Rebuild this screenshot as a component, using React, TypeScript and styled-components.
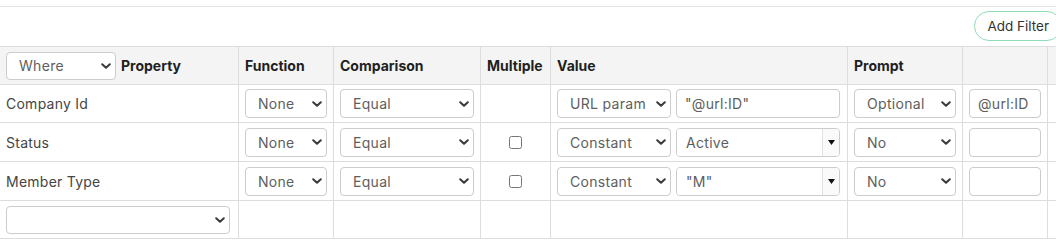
import { FC, ReactNode } from "react";
import styled, { createGlobalStyle } from "styled-components";

const GlobalStyle = createGlobalStyle`
  html, body {
    margin: 0;
    padding: 0;
    background: #ffffff;
    overflow: hidden;
  }
  body {
    font-family: Inter, "Open Sans", "Noto Sans", sans-serif;
    color: #444444;
  }
`;

const Page = styled("div")`
  width: 1062px;
  margin-top: 6px;
  border-top: 1px solid #e4e4e4;
`;

const Toolbar = styled("div")`
  display: flex;
  justify-content: flex-end;
  padding: 4px 0 5px;
`;

const AddButton = styled("button")`
  height: 30px;
  padding: 0 12px;
  border: 1px solid #8fdcb8;
  border-radius: 16px;
  background: #ffffff;
  color: #333333;
  font-family: inherit;
  font-size: 13.5px;
  cursor: pointer;
`;

const Grid = styled("div")`
  display: grid;
  grid-template-columns: 239px 95px 147px 70px 297px 115px 85px 1fr;
  grid-template-rows: 38px 38px 39px 39px 38px;
  border-top: 1px solid #dddddd;
`;

const Cell = styled("div")<{ $head?: boolean; $center?: boolean }>`
  box-sizing: border-box;
  display: flex;
  align-items: center;
  justify-content: ${(p) => (p.$center ? "center" : "flex-start")};
  gap: 5px;
  padding: 0 6px;
  border-right: 1px solid #dddddd;
  border-bottom: 1px solid #dddddd;
  background: ${(p) => (p.$head ? "#f4f4f4" : "#ffffff")};
  min-width: 0;
`;

const HeadText = styled("span")`
  font-size: 14px;
  font-weight: 700;
  color: #1f1f1f;
`;

const Label = styled("span")`
  font-size: 14px;
  letter-spacing: 0.25px;
  color: #454545;
`;

const SelectWrap = styled("div")<{ $w?: number }>`
  position: relative;
  flex: ${(p) => (p.$w ? "0 0 auto" : "1 1 auto")};
  width: ${(p) => (p.$w ? `${p.$w}px` : "100%")};
  min-width: 0;
`;

const NativeSelect = styled("select")<{ $h: number }>`
  appearance: none;
  box-sizing: border-box;
  width: 100%;
  height: ${(p) => p.$h}px;
  padding: 0 20px 0 12px;
  border: 1px solid #cccccc;
  border-radius: 4px;
  background: #ffffff;
  color: #5e5e5e;
  font-family: inherit;
  font-size: 14px;
  letter-spacing: 0.3px;
`;

const Chevron = styled("svg")`
  position: absolute;
  right: 5px;
  top: 50%;
  margin-top: -3px;
  width: 10px;
  height: 6px;
  pointer-events: none;
`;

const TextInput = styled("input")<{ $w?: number }>`
  box-sizing: border-box;
  width: ${(p) => (p.$w ? `${p.$w}px` : "100%")};
  height: 29px;
  padding: 0 8px;
  border: 1px solid #cccccc;
  border-radius: 4px;
  color: #5e5e5e;
  font-family: inherit;
  font-size: 14px;
  letter-spacing: 0.3px;
  min-width: 0;
`;

const Combo = styled("div")`
  box-sizing: border-box;
  display: flex;
  width: 164px;
  height: 29px;
  border: 1px solid #cccccc;
  border-radius: 4px;
  overflow: hidden;
`;

const ComboInput = styled("input")`
  flex: 1 1 auto;
  min-width: 0;
  padding: 0 9px;
  border: none;
  outline: none;
  color: #5e5e5e;
  font-family: inherit;
  font-size: 14px;
  letter-spacing: 0.3px;
`;

const ComboButton = styled("div")`
  display: flex;
  align-items: center;
  justify-content: center;
  width: 27px;
  border-left: 1px solid #e2e2e2;
  background: #fafafa;
`;

const Check = styled("input")`
  width: 13px;
  height: 13px;
  margin: 0;
`;

const Select: FC<{ value: string; w?: number; h?: number }> = ({
  value,
  w,
  h = 29,
}) => (
  <SelectWrap $w={w}>
    <NativeSelect $h={h} defaultValue={value}>
      <option value={value}>{value}</option>
    </NativeSelect>
    <Chevron viewBox="0 0 10 6">
      <path
        d="M1.2 1.2 L5 4.8 L8.8 1.2"
        fill="none"
        stroke="#3a3a3a"
        strokeWidth="2"
        strokeLinecap="round"
        strokeLinejoin="round"
      />
    </Chevron>
  </SelectWrap>
);

const ComboBox: FC<{ value: string }> = ({ value }) => (
  <Combo>
    <ComboInput defaultValue={value} />
    <ComboButton>
      <svg width="7" height="5" viewBox="0 0 7 5">
        <polygon points="0,0 7,0 3.5,5" fill="#111" />
      </svg>
    </ComboButton>
  </Combo>
);

interface IFilterRow {
  property: string;
  multiple: boolean;
  source: string;
  value: string;
  combo: boolean;
  prompt: string;
  param: string;
}

const rows: IFilterRow[] = [
  {
    property: "Company Id",
    multiple: false,
    source: "URL param",
    value: '"@url:ID"',
    combo: false,
    prompt: "Optional",
    param: "@url:ID",
  },
  {
    property: "Status",
    multiple: true,
    source: "Constant",
    value: "Active",
    combo: true,
    prompt: "No",
    param: "",
  },
  {
    property: "Member Type",
    multiple: true,
    source: "Constant",
    value: '"M"',
    combo: true,
    prompt: "No",
    param: "",
  },
];

const Row: FC<{ row: IFilterRow }> = ({ row }) => (
  <>
    <Cell>
      <Label>{row.property}</Label>
    </Cell>
    <Cell>
      <Select value="None" />
    </Cell>
    <Cell>
      <Select value="Equal" />
    </Cell>
    <Cell $center>{row.multiple && <Check type="checkbox" />}</Cell>
    <Cell>
      <Select value={row.source} w={114} />
      {row.combo ? (
        <ComboBox value={row.value} />
      ) : (
        <TextInput $w={164} defaultValue={row.value} />
      )}
    </Cell>
    <Cell>
      <Select value={row.prompt} />
    </Cell>
    <Cell>
      <TextInput defaultValue={row.param} />
    </Cell>
    <Cell />
  </>
);

const Head: FC<{ children?: ReactNode }> = ({ children }) => (
  <Cell $head>{children}</Cell>
);

export default function App() {
  return (
    <>
      <GlobalStyle />
      <Page>
        <Toolbar>
          <AddButton>Add Filter</AddButton>
        </Toolbar>
        <Grid>
          <Head>
            <Select value="Where" w={110} h={28} />
            <HeadText>Property</HeadText>
          </Head>
          <Head>
            <HeadText>Function</HeadText>
          </Head>
          <Head>
            <HeadText>Comparison</HeadText>
          </Head>
          <Head>
            <HeadText>Multiple</HeadText>
          </Head>
          <Head>
            <HeadText>Value</HeadText>
          </Head>
          <Head>
            <HeadText>Prompt</HeadText>
          </Head>
          <Head />
          <Head />
          {rows.map((r) => (
            <Row key={r.property} row={r} />
          ))}
          <Cell>
            <Select value="" w={224} h={28} />
          </Cell>
          <Cell />
          <Cell />
          <Cell />
          <Cell />
          <Cell />
          <Cell />
          <Cell />
        </Grid>
      </Page>
    </>
  );
}
